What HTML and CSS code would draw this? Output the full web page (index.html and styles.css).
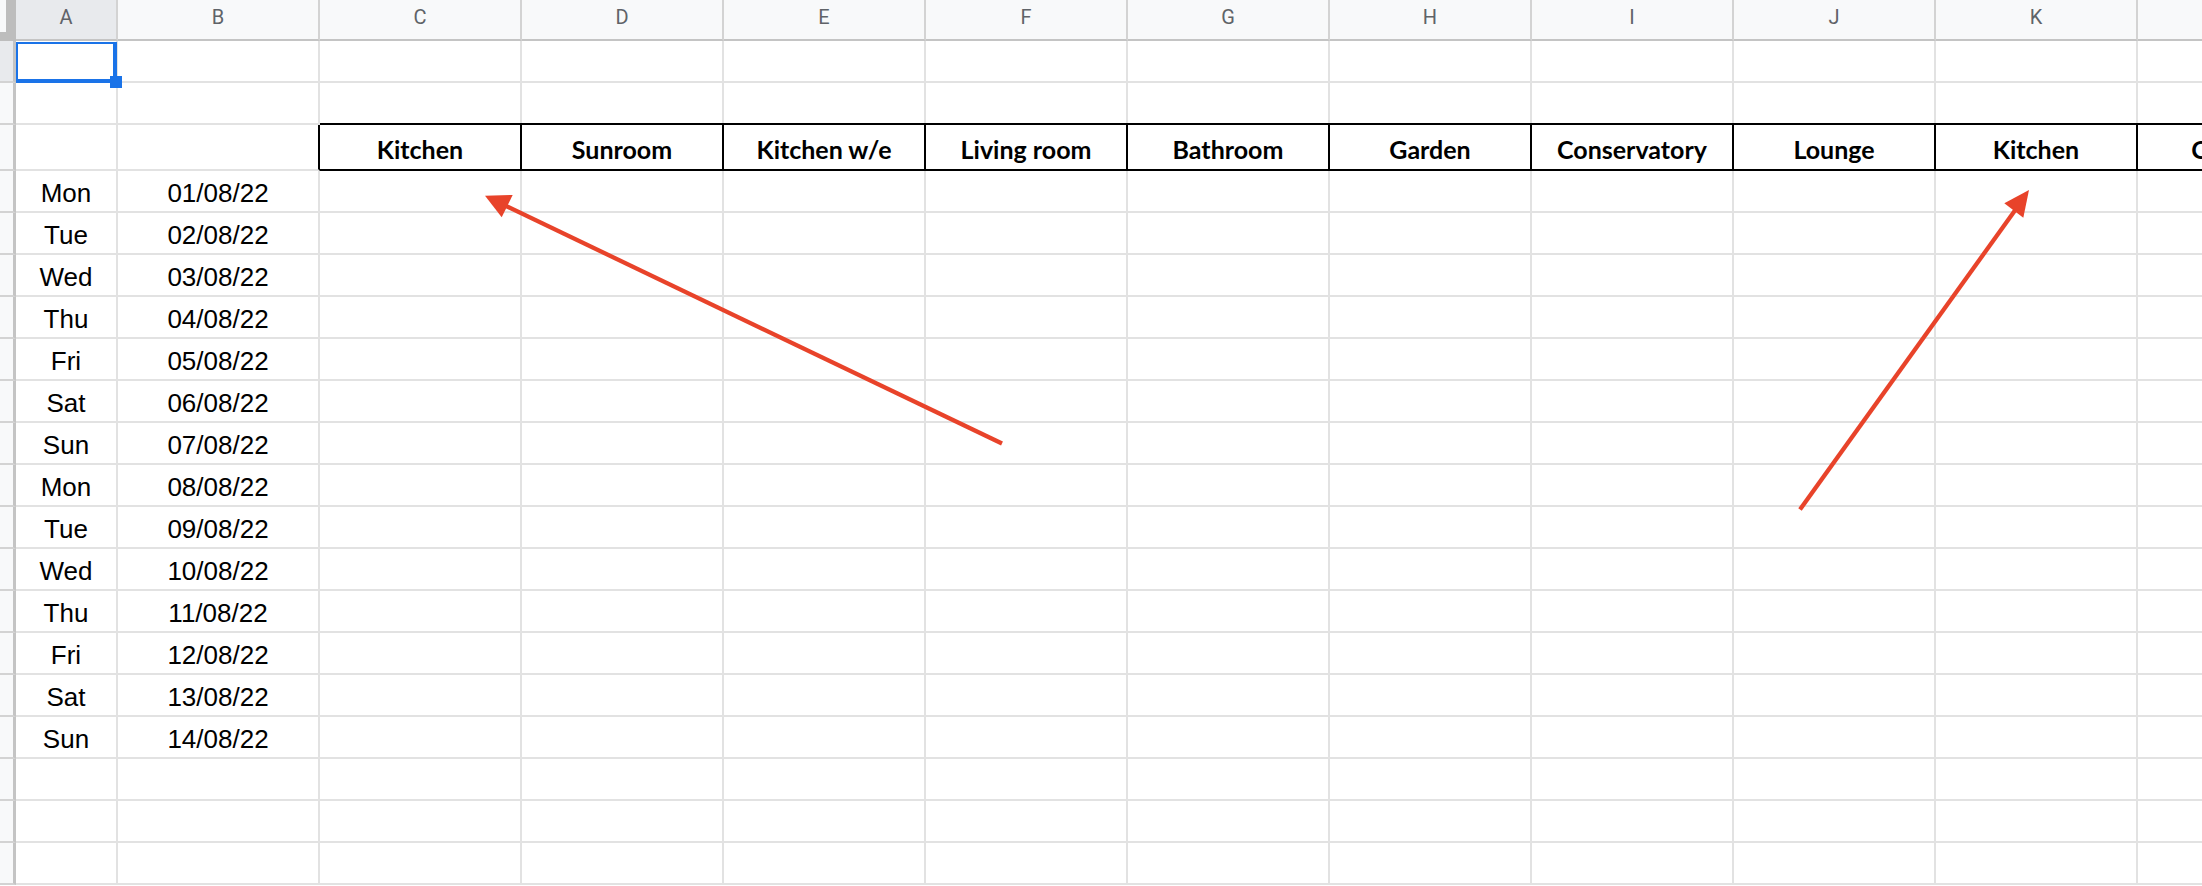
FILE: index.html
```html
<!DOCTYPE html>
<html>
<head>
<meta charset="utf-8">
<link rel="stylesheet" href="styles.css">
</head>
<body>
<div class="viewport">
  <div class="sheet">
    <!-- column headers -->
    <div class="corner"><span class="corner-inner"></span></div>
    <div class="ch sel">A</div><div class="ch">B</div><div class="ch">C</div><div class="ch">D</div><div class="ch">E</div><div class="ch">F</div><div class="ch">G</div><div class="ch">H</div><div class="ch">I</div><div class="ch">J</div><div class="ch">K</div><div class="ch">L</div>

    <!-- row 1 -->
    <div class="rh sel"></div>
    <div class="c a1"><div class="selection"><span class="handle"></span></div></div>
    <div class="c"></div><div class="c"></div><div class="c"></div><div class="c"></div><div class="c"></div><div class="c"></div><div class="c"></div><div class="c"></div><div class="c"></div><div class="c"></div><div class="c"></div>

    <!-- row 2 -->
    <div class="rh"></div>
    <div class="c"></div><div class="c"></div><div class="c"></div><div class="c"></div><div class="c"></div><div class="c"></div><div class="c"></div><div class="c"></div><div class="c"></div><div class="c"></div><div class="c"></div><div class="c"></div>

    <!-- row 3: room headers -->
    <div class="rh"></div>
    <div class="c"></div><div class="c edge"></div>
    <div class="c room">Kitchen</div>
    <div class="c room">Sunroom</div>
    <div class="c room">Kitchen w/e</div>
    <div class="c room">Living room</div>
    <div class="c room">Bathroom</div>
    <div class="c room">Garden</div>
    <div class="c room">Conservatory</div>
    <div class="c room">Lounge</div>
    <div class="c room">Kitchen</div>
    <div class="c room">Corridor</div>

    <!-- data rows -->
    <div class="rh"></div><div class="c t">Mon</div><div class="c t">01/08/22</div><div class="c"></div><div class="c"></div><div class="c"></div><div class="c"></div><div class="c"></div><div class="c"></div><div class="c"></div><div class="c"></div><div class="c"></div><div class="c"></div>
    <div class="rh"></div><div class="c t">Tue</div><div class="c t">02/08/22</div><div class="c"></div><div class="c"></div><div class="c"></div><div class="c"></div><div class="c"></div><div class="c"></div><div class="c"></div><div class="c"></div><div class="c"></div><div class="c"></div>
    <div class="rh"></div><div class="c t">Wed</div><div class="c t">03/08/22</div><div class="c"></div><div class="c"></div><div class="c"></div><div class="c"></div><div class="c"></div><div class="c"></div><div class="c"></div><div class="c"></div><div class="c"></div><div class="c"></div>
    <div class="rh"></div><div class="c t">Thu</div><div class="c t">04/08/22</div><div class="c"></div><div class="c"></div><div class="c"></div><div class="c"></div><div class="c"></div><div class="c"></div><div class="c"></div><div class="c"></div><div class="c"></div><div class="c"></div>
    <div class="rh"></div><div class="c t">Fri</div><div class="c t">05/08/22</div><div class="c"></div><div class="c"></div><div class="c"></div><div class="c"></div><div class="c"></div><div class="c"></div><div class="c"></div><div class="c"></div><div class="c"></div><div class="c"></div>
    <div class="rh"></div><div class="c t">Sat</div><div class="c t">06/08/22</div><div class="c"></div><div class="c"></div><div class="c"></div><div class="c"></div><div class="c"></div><div class="c"></div><div class="c"></div><div class="c"></div><div class="c"></div><div class="c"></div>
    <div class="rh"></div><div class="c t">Sun</div><div class="c t">07/08/22</div><div class="c"></div><div class="c"></div><div class="c"></div><div class="c"></div><div class="c"></div><div class="c"></div><div class="c"></div><div class="c"></div><div class="c"></div><div class="c"></div>
    <div class="rh"></div><div class="c t">Mon</div><div class="c t">08/08/22</div><div class="c"></div><div class="c"></div><div class="c"></div><div class="c"></div><div class="c"></div><div class="c"></div><div class="c"></div><div class="c"></div><div class="c"></div><div class="c"></div>
    <div class="rh"></div><div class="c t">Tue</div><div class="c t">09/08/22</div><div class="c"></div><div class="c"></div><div class="c"></div><div class="c"></div><div class="c"></div><div class="c"></div><div class="c"></div><div class="c"></div><div class="c"></div><div class="c"></div>
    <div class="rh"></div><div class="c t">Wed</div><div class="c t">10/08/22</div><div class="c"></div><div class="c"></div><div class="c"></div><div class="c"></div><div class="c"></div><div class="c"></div><div class="c"></div><div class="c"></div><div class="c"></div><div class="c"></div>
    <div class="rh"></div><div class="c t">Thu</div><div class="c t">11/08/22</div><div class="c"></div><div class="c"></div><div class="c"></div><div class="c"></div><div class="c"></div><div class="c"></div><div class="c"></div><div class="c"></div><div class="c"></div><div class="c"></div>
    <div class="rh"></div><div class="c t">Fri</div><div class="c t">12/08/22</div><div class="c"></div><div class="c"></div><div class="c"></div><div class="c"></div><div class="c"></div><div class="c"></div><div class="c"></div><div class="c"></div><div class="c"></div><div class="c"></div>
    <div class="rh"></div><div class="c t">Sat</div><div class="c t">13/08/22</div><div class="c"></div><div class="c"></div><div class="c"></div><div class="c"></div><div class="c"></div><div class="c"></div><div class="c"></div><div class="c"></div><div class="c"></div><div class="c"></div>
    <div class="rh"></div><div class="c t">Sun</div><div class="c t">14/08/22</div><div class="c"></div><div class="c"></div><div class="c"></div><div class="c"></div><div class="c"></div><div class="c"></div><div class="c"></div><div class="c"></div><div class="c"></div><div class="c"></div>

    <!-- empty rows -->
    <div class="rh"></div><div class="c"></div><div class="c"></div><div class="c"></div><div class="c"></div><div class="c"></div><div class="c"></div><div class="c"></div><div class="c"></div><div class="c"></div><div class="c"></div><div class="c"></div><div class="c"></div>
    <div class="rh"></div><div class="c"></div><div class="c"></div><div class="c"></div><div class="c"></div><div class="c"></div><div class="c"></div><div class="c"></div><div class="c"></div><div class="c"></div><div class="c"></div><div class="c"></div><div class="c"></div>
    <div class="rh"></div><div class="c"></div><div class="c"></div><div class="c"></div><div class="c"></div><div class="c"></div><div class="c"></div><div class="c"></div><div class="c"></div><div class="c"></div><div class="c"></div><div class="c"></div><div class="c"></div>
  </div>

  <svg class="arrows" width="2202" height="886" viewBox="0 0 2202 886">
    <line x1="1002" y1="443.5" x2="505" y2="205.5" stroke="#e8432a" stroke-width="4.3"/>
    <polygon points="485,195.7 512.7,195 501.7,217.3" fill="#e8432a"/>
    <line x1="1800" y1="509.5" x2="2016" y2="209" stroke="#e8432a" stroke-width="4.3"/>
    <polygon points="2029,190 2004.3,203.3 2023.3,217.7" fill="#e8432a"/>
  </svg>
</div>
</body>
</html>
```

FILE: styles.css
```css
* { box-sizing: border-box; }

html, body {
  margin: 0;
  padding: 0;
  background: #ffffff;
  overflow: hidden;
}

.viewport {
  position: relative;
  width: 2202px;
  height: 886px;
  overflow: hidden;
}

.sheet {
  display: grid;
  grid-template-columns: 16px 102px repeat(11, 202px);
  grid-template-rows: 41px 42px 42px 46px repeat(17, 42px);
  width: max-content;
}

.corner {
  position: relative;
  background: #bdbdbd;
}
.corner-inner {
  position: absolute;
  left: 0;
  top: 0;
  width: 6px;
  height: 32px;
  background: #f8f9fa;
}

.ch {
  background: #f8f9fa;
  border-right: 2px solid #d3d3d3;
  border-bottom: 2px solid #c4c4c4;
  display: flex;
  justify-content: center;
  align-items: flex-start;
  padding-top: 5px;
  font-family: Roboto, "Liberation Sans", sans-serif;
  font-size: 20px;
  line-height: 24px;
  color: #5f6368;
}
.ch.sel {
  background: #e8eaed;
}

.rh {
  background: #f8f9fa;
  border-right: 3px solid #c4c4c4;
  border-bottom: 2px solid #d3d3d3;
}
.rh.sel {
  background: #e8eaed;
}

.c {
  background: #ffffff;
  border-right: 2px solid #e2e2e2;
  border-bottom: 2px solid #e2e2e2;
}

.c.t {
  display: flex;
  justify-content: center;
  align-items: flex-end;
  padding-bottom: 3px;
  font-family: "Liberation Sans", Arial, sans-serif;
  font-size: 26px;
  line-height: 30px;
  color: #000000;
}

.c.edge {
  border-right-color: #000000;
}

.c.room {
  border-right: 2px solid #000000;
  border-bottom: 2px solid #000000;
  box-shadow: 0 -2px 0 #000000;
  display: flex;
  justify-content: center;
  align-items: center;
  padding-top: 3px;
  font-family: Lato, "Open Sans", sans-serif;
  font-weight: 700;
  font-size: 25px;
  line-height: 30px;
  color: #000000;
  white-space: nowrap;
  overflow: hidden;
}

.a1 {
  position: relative;
}
.selection {
  position: absolute;
  left: 0;
  top: 1px;
  width: 101px;
  height: 41px;
  border-left: 2px solid #1a73e8;
  border-top: 2px solid #1a73e8;
  border-right: 4px solid #1a73e8;
  border-bottom: 4px solid #1a73e8;
  z-index: 2;
}
.handle {
  position: absolute;
  right: -9px;
  bottom: -9px;
  width: 12px;
  height: 12px;
  background: #1a73e8;
}

.arrows {
  position: absolute;
  left: 0;
  top: 0;
  pointer-events: none;
}
```
